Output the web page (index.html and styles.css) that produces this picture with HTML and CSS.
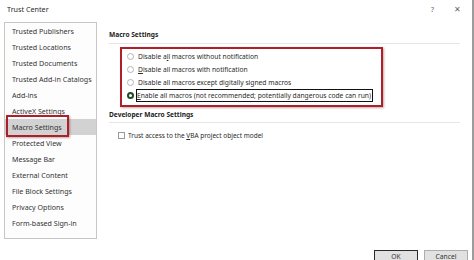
FILE: index.html
```html
<!DOCTYPE html>
<html>
<head>
<meta charset="utf-8">
<title>Trust Center</title>
<link rel="stylesheet" href="styles.css">
</head>
<body>
<div class="dialog">
  <div class="titlebar">
    <span class="title">Trust Center</span>
    <span class="tb-btns"><span class="help">?</span><span class="close">✕</span></span>
  </div>
  <div class="main">
    <nav class="nav">
      <div class="item">Trusted Publishers</div>
      <div class="item">Trusted Locations</div>
      <div class="item">Trusted Documents</div>
      <div class="item">Trusted Add-in Catalogs</div>
      <div class="item">Add-ins</div>
      <div class="item">ActiveX Settings</div>
      <div class="item selected">Macro Settings<span class="hl-nav"></span></div>
      <div class="item">Protected View</div>
      <div class="item">Message Bar</div>
      <div class="item">External Content</div>
      <div class="item">File Block Settings</div>
      <div class="item">Privacy Options</div>
      <div class="item">Form-based Sign-in</div>
    </nav>
    <section class="content">
      <h2 class="section-title">Macro Settings</h2>
      <div class="options">
        <div class="opt"><span class="radio"></span><span class="lbl">Disable a<u>l</u>l macros without notification</span></div>
        <div class="opt"><span class="radio"></span><span class="lbl"><u>D</u>isable all macros with notification</span></div>
        <div class="opt"><span class="radio"></span><span class="lbl">Disable all macros except digitally signed macros</span></div>
        <div class="opt"><span class="radio on"></span><span class="lbl focus"><u>E</u>nable all macros (not recommended; potentially dangerous code can run)</span></div>
        <span class="hl-box"></span>
      </div>
      <h2 class="section-title dev">Developer Macro Settings</h2>
      <div class="chk-row"><span class="chk"></span><span class="lbl">Trust access to the <u>V</u>BA project object model</span></div>
    </section>
  </div>
  <div class="footer">
    <span class="btn default">OK</span>
    <span class="btn">Cancel</span>
  </div>
</div>
</body>
</html>
```

FILE: styles.css
```css
html, body {
  margin: 0;
  padding: 0;
  background: #ffffff;
}
body {
  width: 474px;
  height: 260px;
  overflow: hidden;
  font-family: "Noto Sans", "Open Sans", sans-serif;
  font-size: 6.7px;
  color: #1f1f1f;
}
.dialog {
  box-sizing: border-box;
  width: 474px;
  height: 260px;
  border-right: 2px solid #9c9c9c;
  display: flex;
  flex-direction: column;
}
.titlebar {
  flex: none;
  height: 22px;
  display: flex;
  align-items: flex-start;
  justify-content: space-between;
  padding: 3px 0 0 7px;
  box-sizing: border-box;
}
.title {
  font-size: 7.2px;
  line-height: 12px;
  color: #2b2b2b;
}
.tb-btns {
  display: flex;
  gap: 20px;
  padding-right: 11px;
  line-height: 12px;
  color: #666;
}
.help { font-size: 7.5px; }
.close { font-size: 7.5px; }
.main {
  flex: none;
  display: flex;
  align-items: flex-start;
}
.nav {
  margin-left: 4px;
  width: 93px;
  height: 217px;
  box-sizing: border-box;
  border: 1px solid #c6c6c6;
  background: #fdfdfd;
  flex: none;
}
.item {
  position: relative;
  height: 16px;
  line-height: 16px;
  padding-left: 7px;
  font-size: 7.1px;
  color: #333;
  white-space: nowrap;
}
.item.selected {
  background: #d2d2d2;
}
.hl-nav {
  position: absolute;
  left: 1px;
  top: -4px;
  width: 63px;
  height: 22px;
  box-sizing: border-box;
  border: 2.5px solid #ad2029;
  box-shadow: 1px 1px 2px rgba(80, 0, 0, 0.35);
}
.content {
  margin-left: 12px;
  flex: 1;
  padding-right: 12px;
}
.section-title {
  margin: 7px 0 0 0;
  font-size: 6.6px;
  font-weight: bold;
  line-height: 12px;
  padding-bottom: 2px;
  border-bottom: 1px solid #e6e6e6;
  color: #222;
}
.section-title.dev {
  margin-top: 7px;
  padding-bottom: 1px;
}
.options {
  position: relative;
  padding: 6px 0 0 17.5px;
}
.opt {
  height: 13px;
  display: flex;
  align-items: center;
}
.radio {
  width: 7px;
  height: 7px;
  box-sizing: border-box;
  border: 1px solid #b4b4b4;
  border-radius: 50%;
  background: #fff;
  margin-right: 4.5px;
  flex: none;
}
.radio.on {
  border: 2px solid #1f4a25;
}
.lbl {
  white-space: nowrap;
  color: #2a2a2a;
  line-height: 11px;
}
.lbl u {
  text-decoration-thickness: 0.6px;
  text-underline-offset: 1px;
}
.lbl.focus {
  outline: 1px solid #111;
  outline-offset: 0;
  padding: 0 1px 0 0;
  margin-left: -1px;
}
.hl-box {
  position: absolute;
  left: 11px;
  top: 3px;
  width: 263px;
  height: 60px;
  box-sizing: border-box;
  border: 2.5px solid #ad2029;
  box-shadow: 1px 1px 2px rgba(80, 0, 0, 0.35);
}
.chk-row {
  margin-top: 6px;
  padding-left: 8.5px;
  height: 12px;
  display: flex;
  align-items: center;
}
.chk-row .lbl {
  font-size: 6.5px;
}
.chk {
  width: 7px;
  height: 7px;
  box-sizing: border-box;
  border: 1px solid #9a9a9a;
  background: #fff;
  margin-right: 3.5px;
  flex: none;
}
.footer {
  flex: none;
  display: flex;
  justify-content: flex-end;
  gap: 6px;
  padding: 11px 4px 0 0;
}
.btn {
  width: 44px;
  height: 13px;
  box-sizing: border-box;
  border: 1px solid #adadad;
  background: #e1e1e1;
  display: flex;
  align-items: center;
  justify-content: center;
  font-size: 6.7px;
  color: #333;
}
.btn.default {
  border: 1.5px solid #2a2a2a;
}
```
